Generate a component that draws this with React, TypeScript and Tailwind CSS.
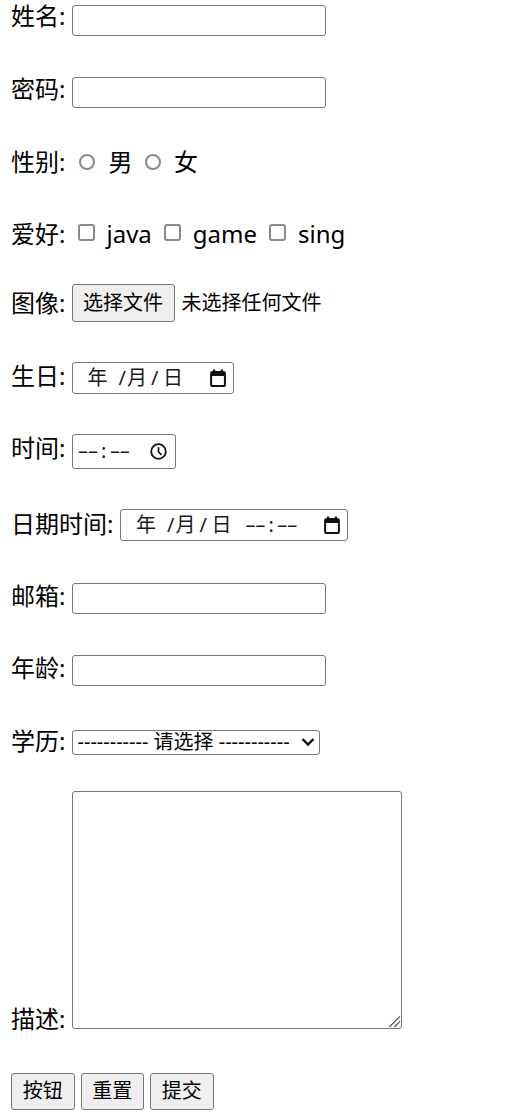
import React from 'react';

const LABEL = 'shrink-0 text-[24px] leading-none';

function CalendarIcon() {
  return (
    <svg width="16" height="18" viewBox="0 0 16 18" className="shrink-0">
      <rect x="1.1" y="3" width="13.8" height="14" rx="1.6" fill="none" stroke="#111" strokeWidth="2" />
      <rect x="1" y="3" width="14" height="4" fill="#111" />
      <rect x="3" y="0.5" width="2.2" height="3" fill="#111" />
      <rect x="10.8" y="0.5" width="2.2" height="3" fill="#111" />
    </svg>
  );
}

function ClockIcon() {
  return (
    <svg width="17" height="17" viewBox="0 0 17 17" className="shrink-0">
      <circle cx="8.5" cy="8.5" r="7.3" fill="none" stroke="#111" strokeWidth="1.8" />
      <path d="M8.5 4.3V8.9L11.6 12" fill="none" stroke="#111" strokeWidth="1.7" />
    </svg>
  );
}

function DateParts() {
  return (
    <>
      <span>年</span>
      <span className="ml-[11px]">/</span>
      <span className="ml-px">月</span>
      <span className="ml-[4px]">/</span>
      <span className="ml-[4.5px]">日</span>
    </>
  );
}

function TimeParts() {
  return (
    <>
      <span>––</span>
      <span className="ml-[3px]">:</span>
      <span className="ml-[3.5px]">––</span>
    </>
  );
}

export default function App() {
  return (
    <div className="min-h-screen bg-white pl-[11px] pt-1 text-black [font-family:'Noto_Sans','Noto_Sans_CJK_SC',sans-serif]">
      {/* 姓名 */}
      <div className="flex h-8 items-center">
        <span className={`${LABEL} mb-2 w-[60.5px]`}>姓名:</span>
        <input type="text" className="h-[31px] w-[254px] rounded-[3px] border border-[#767676] bg-white px-1 text-[20px] outline-none" />
      </div>

      {/* 密码 */}
      <div className="mt-10 flex h-8 items-center">
        <span className={`${LABEL} mb-[6px] w-[60.5px]`}>密码:</span>
        <input type="password" className="h-[31px] w-[254px] rounded-[3px] border border-[#767676] bg-white px-1 text-[20px] outline-none" />
      </div>

      {/* 性别 */}
      <div className="mt-[38px] flex h-8 items-center">
        <span className={`${LABEL} w-[60.5px]`}>性别:</span>
        <input type="radio" name="sex" className="ml-[7.5px] h-4 w-4 shrink-0 appearance-none rounded-full border-2 border-[#8a8a8a] bg-white" />
        <span className="ml-[13.5px] text-[24px] leading-none">男</span>
        <input type="radio" name="sex" className="ml-[12.5px] h-4 w-4 shrink-0 appearance-none rounded-full border-2 border-[#8a8a8a] bg-white" />
        <span className="ml-[13px] text-[24px] leading-none">女</span>
      </div>

      {/* 爱好 */}
      <div className="mt-[38px] flex h-8 items-center">
        <span className={`${LABEL} mt-1 w-[60.5px]`}>爱好:</span>
        <input type="checkbox" className="ml-[6px] h-[17px] w-[17px] shrink-0 appearance-none rounded-[3px] border-2 border-[#8a8a8a] bg-white" />
        <span className="ml-[12px] mt-[3px] text-[24px] leading-none">java</span>
        <input type="checkbox" className="ml-[12px] h-[17px] w-[17px] shrink-0 appearance-none rounded-[3px] border-2 border-[#8a8a8a] bg-white" />
        <span className="ml-[12px] mt-[3px] text-[24px] leading-none">game</span>
        <input type="checkbox" className="ml-[12px] h-[17px] w-[17px] shrink-0 appearance-none rounded-[3px] border-2 border-[#8a8a8a] bg-white" />
        <span className="ml-[12px] mt-[3px] text-[24px] leading-none">sing</span>
      </div>

      {/* 图像 */}
      <div className="mt-9 flex h-[38px] items-center">
        <span className={`${LABEL} w-[60.5px]`}>图像:</span>
        <button className="h-[37.5px] w-[103px] shrink-0 rounded-[3px] border border-[#767676] bg-[#efefef] text-[20px] leading-none">
          选择文件
        </button>
        <span className="ml-[7px] text-[20px] leading-none">未选择任何文件</span>
      </div>

      {/* 生日 */}
      <div className="mt-10 flex h-8 items-center">
        <span className={`${LABEL} mb-1 w-[60.5px]`}>生日:</span>
        <div className="flex h-[31.5px] w-[162px] shrink-0 items-center rounded-[3px] border border-[#767676] pl-[15px] text-[20px] leading-none text-[#1a1a1a]">
          <DateParts />
          <span className="ml-auto mr-[6.5px] flex">
            <CalendarIcon />
          </span>
        </div>
      </div>

      {/* 时间 */}
      <div className="mt-[39px] flex h-9 items-center">
        <span className={`${LABEL} mb-[7px] w-[60.5px]`}>时间:</span>
        <div className="flex h-[35px] w-[104.5px] shrink-0 items-center rounded-[3px] border border-[#767676] pl-[5.5px] text-[20px] leading-none text-[#1a1a1a]">
          <TimeParts />
          <span className="ml-auto mr-[8px] flex">
            <ClockIcon />
          </span>
        </div>
      </div>

      {/* 日期时间 */}
      <div className="mt-10 flex h-8 items-center">
        <span className={`${LABEL} mb-[2px] w-[108.5px]`}>日期时间:</span>
        <div className="flex h-[31.5px] w-[228px] shrink-0 items-center rounded-[3px] border border-[#767676] pl-[15.5px] text-[20px] leading-none text-[#1a1a1a]">
          <DateParts />
          <span className="ml-[14px] flex">
            <TimeParts />
          </span>
          <span className="ml-auto mr-[6.5px] flex">
            <CalendarIcon />
          </span>
        </div>
      </div>

      {/* 邮箱 */}
      <div className="mt-[41px] flex h-8 items-center">
        <span className={`${LABEL} mb-[5px] w-[60.5px]`}>邮箱:</span>
        <input type="email" className="h-[31px] w-[254px] rounded-[3px] border border-[#767676] bg-white px-1 text-[20px] outline-none" />
      </div>

      {/* 年龄 */}
      <div className="mt-10 flex h-8 items-center">
        <span className={`${LABEL} mb-1 w-[60.5px]`}>年龄:</span>
        <input type="number" className="h-[31px] w-[254px] rounded-[3px] border border-[#767676] bg-white px-1 text-[20px] outline-none" />
      </div>

      {/* 学历 */}
      <div className="mt-[43px] flex h-[26px] items-center">
        <span className={`${LABEL} mb-[3px] w-[60.5px]`}>学历:</span>
        <div className="relative h-[25px] w-[248.5px] shrink-0">
          <select className="h-full w-full appearance-none rounded-[3px] border border-[#767676] bg-white pl-[5px] pr-6 text-[20px] leading-none outline-none">
            <option>----------- 请选择 -----------</option>
          </select>
          <svg width="14" height="9" viewBox="0 0 14 9" className="pointer-events-none absolute right-[5px] top-1/2 -translate-y-1/2">
            <path d="M1.5 1.5L7 7L12.5 1.5" fill="none" stroke="#111" strokeWidth="2.4" />
          </svg>
        </div>
      </div>

      {/* 描述 */}
      <div className="mt-9 flex items-end">
        <span className={`${LABEL} mb-[-2.5px] w-[60.5px]`}>描述:</span>
        <div className="relative h-[237.5px] w-[330px] shrink-0">
          <textarea className="block h-full w-full resize-none rounded-[3px] border border-[#767676] bg-white outline-none" />
          <svg width="15" height="15" viewBox="0 0 15 15" className="pointer-events-none absolute bottom-0 right-0">
            <path d="M2.3 13L13 2.3M7.3 13L13 7.3" fill="none" stroke="#555" strokeWidth="1.2" />
          </svg>
        </div>
      </div>

      {/* 按钮 */}
      <div className="mt-11 flex gap-[6px]">
        <button className="h-[37px] w-[63.5px] rounded-[3px] border border-[#767676] bg-[#efefef] text-[20px] leading-none">按钮</button>
        <button className="h-[37px] w-[63.5px] rounded-[3px] border border-[#767676] bg-[#efefef] text-[20px] leading-none">重置</button>
        <button className="h-[37px] w-[63.5px] rounded-[3px] border border-[#767676] bg-[#efefef] text-[20px] leading-none">提交</button>
      </div>
    </div>
  );
}
